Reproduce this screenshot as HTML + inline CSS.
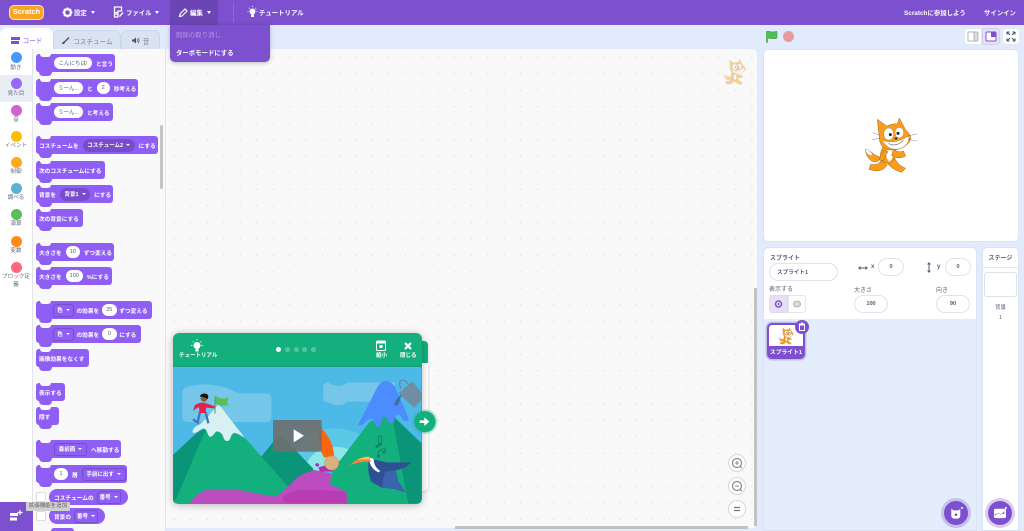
<!DOCTYPE html>
<html lang="ja"><head><meta charset="utf-8"><title>Scratch</title>
<style>
*{box-sizing:border-box}
html{margin:0;padding:0;background:#e1ebfb}
body{margin:0;padding:0;width:1024px;height:531px;overflow:hidden;position:relative;background:#e1ebfb;font-family:"Liberation Sans","Noto Sans CJK JP",sans-serif;font-size:6.4px;color:#575e75;filter:blur(.3px)}
.a{position:absolute;white-space:nowrap}
.hd{left:0;top:0;width:1024px;height:25px;background:#7c50ce}
.w{color:#fff;font-weight:700}
.caret{position:absolute;width:0;height:0;border-left:2.5px solid transparent;border-right:2.5px solid transparent;border-top:3px solid #fff}
.tab{position:absolute;top:30px;height:20px;background:#d9e3f2;border:1px solid #ccd8ea;border-bottom:0;border-radius:6px 6px 0 0;color:#7d8599;font-size:6.6px;display:flex;align-items:center;justify-content:center;gap:3px}
.cat{position:absolute;width:11px;height:11px;border-radius:50%;left:10.5px}
.cl{position:absolute;left:0;width:32px;text-align:center;font-size:5.6px;line-height:8px;color:#666c80}
.b{position:absolute;left:36px;height:18px;background:#8f5ff5;border-radius:3px;color:#fff;font-size:5.7px;font-weight:700;display:flex;align-items:center;gap:4px;padding-left:3px;white-space:nowrap}
.b:after{content:"";position:absolute;left:3px;bottom:-3.5px;width:13px;height:4px;background:#8f5ff5;border-radius:0 0 4px 4px}
.b:before{content:"";position:absolute;left:4px;top:0;width:11px;height:3px;background:#f9f9f9;border-radius:0 0 4px 4px}
.s{padding-left:18px}
.p{background:#fff;color:#575e75;border-radius:6px;height:12px;display:inline-flex;align-items:center;justify-content:center;font-weight:400;font-size:5.5px;flex:none}
.d{background:#774dcb;color:#fff;border-radius:7px;height:13px;display:inline-flex;align-items:center;justify-content:center;gap:3px;font-size:5.5px;flex:none}
.o{background:#8f5ff5;border:.5px solid #774dcb;border-radius:3px}
.d i{display:inline-block;width:0;height:0;border-left:2.2px solid transparent;border-right:2.2px solid transparent;border-top:2.6px solid #fff}
.r{position:absolute;height:16px;background:#8f5ff5;border-radius:8px;color:#fff;font-weight:700;font-size:5.7px;display:flex;align-items:center;gap:3px;padding-left:5px;white-space:nowrap}
.ck{position:absolute;left:36px;width:10px;height:10px;background:#fff;border:1px solid #ddd;border-radius:2px}
.in{position:absolute;background:#fff;border:1px solid #dfe3ea;border-radius:10px;height:18px;display:flex;align-items:center;justify-content:center;font-size:5.6px;color:#575e75;font-weight:700}
.z{position:absolute;left:728px;width:18px;height:18px;border-radius:50%;background:#fff;border:1px solid #d8d8d8;color:#777}
.sq{position:absolute;top:28px;width:18px;height:17px;background:#fff;border:1px solid #e3e9f2}
.fab{position:absolute;top:501px;width:24px;height:24px;border-radius:50%;background:#7c50ce;box-shadow:0 0 0 3px rgba(124,80,206,.28)}
</style></head><body>
<svg width="0" height="0" style="position:absolute"><defs>
<symbol id="cat" viewBox="0 0 270 270">
<path d="M115 183C95 192 78 172 76 148 88 148 98 162 112 168L122 172Z" fill="#fa9c1c" stroke="#9a6a20" stroke-width="1.500"/>
<path d="M76 148C86 148 94 156 98 166 88 168 78 160 76 148Z" fill="#fff" stroke="#999" stroke-width="1"/>
<path d="M125 180Q115 198 92 193L87 208Q125 222 142 194Z" fill="#fa9c1c" stroke="#9a6a20" stroke-width="1.500"/>
<path d="M135 180Q150 207 185 217L197 205Q170 195 162 168Z" fill="#fa9c1c" stroke="#9a6a20" stroke-width="1.500"/>
<path d="M128 142Q116 165 125 186L150 190Q168 178 166 146Z" fill="#fa9c1c" stroke="#9a6a20" stroke-width="1.500"/>
<path d="M140 150Q135 172 148 186 162 175 160 148Z" fill="#fff"/>
<path d="M160 148Q178 160 190 153L197 168Q175 180 155 166Z" fill="#fa9c1c" stroke="#9a6a20" stroke-width="1.500"/>
<path d="M132 150Q120 165 118 180L130 182Q136 165 144 155Z" fill="#fa9c1c" stroke="#9a6a20" stroke-width="1.500"/>
<path d="M112 58L140 78Q160 70 172 72L178 54 197 90Q222 110 205 130 185 152 150 150 118 145 118 112 115 90 112 58Z" fill="#fa9c1c" stroke="#9a6a20" stroke-width="1.500"/>
<path d="M126 120Q160 136 206 108 210 135 180 146 145 154 126 120Z" fill="#fff" stroke="#9a6a20" stroke-width="1"/>
<ellipse cx="146" cy="102" rx="15" ry="18" fill="#fff" stroke="#777" stroke-width="1.200"/><ellipse cx="178" cy="98" rx="13" ry="16" fill="#fff" stroke="#777" stroke-width="1.200"/>
<circle cx="151" cy="104" r="4.500" fill="#222"/><circle cx="174" cy="100" r="4.500" fill="#222"/><path d="M162 114l11-2-4 8z" fill="#222"/>
<path d="M146 130C158 140 180 134 190 120" fill="none" stroke="#333" stroke-width="1.600"/>
<path d="M98 98l22 8M96 118l24-2M204 108l26-6M204 118l26 4" stroke="#666" stroke-width="1.200" fill="none"/>
</symbol></defs></svg>

<div class="a hd"></div>
<div class="a" style="left:9px;top:5px;width:35px;height:15px;background:#f7a623;border:1.500px solid #fde3b5;border-radius:5px;color:#fff;font-size:7.500px;font-weight:700;text-align:center;line-height:12px;overflow:hidden">Scratch</div>
<svg class="a" style="left:62px;top:7px" width="11" height="11" viewBox="0 0 11 11"><circle cx="5.500" cy="5.500" r="3.400" fill="none" stroke="#fff" stroke-width="2.200"/><path d="M5.500 .5v2M5.500 8.500v2M.5 5.500h2M8.500 5.500h2M2 2l1.400 1.400M7.600 7.600L9 9M9 2L7.600 3.400M3.400 7.600L2 9" stroke="#fff" stroke-width="1.600"/></svg>
<div class="a w" style="left:74px;top:8px">設定</div><div class="caret" style="left:91px;top:11px"></div>
<svg class="a" style="left:113px;top:6px" width="11" height="12" viewBox="0 0 11 12"><path d="M1.500 1h7v4H5v1.500H1.500zM1.500 8h3.500v3H1.500z" fill="none" stroke="#fff" stroke-width="1.300"/><path d="M6 10l3.500-4 1 1-3.500 4z" fill="#fff"/></svg>
<div class="a w" style="left:126px;top:8px">ファイル</div><div class="caret" style="left:155px;top:11px"></div>
<div class="a" style="left:170px;top:0;width:48px;height:25px;background:#6b45b4"></div>
<svg class="a" style="left:178px;top:7px" width="10" height="11" viewBox="0 0 10 11"><path d="M1.500 9.500l.5-2.500 5-5 2 2-5 5z" fill="none" stroke="#fff" stroke-width="1.200"/></svg>
<div class="a w" style="left:190px;top:8px">編集</div><div class="caret" style="left:207px;top:11px"></div>
<div class="a" style="left:233px;top:3px;height:19px;border-left:1px dotted #9e7fdc"></div>
<svg class="a" style="left:247px;top:6px" width="11" height="13" viewBox="0 0 11 13"><circle cx="5.500" cy="5.500" r="3" fill="#fff"/><rect x="4" y="8.500" width="3" height="2.500" fill="#fff"/><path d="M5.500 0v1M.5 5.500h1M9.500 5.500h1M1.800 1.800l.8.8M9.200 1.800l-.8.8" stroke="#fff" stroke-width=".8"/></svg>
<div class="a w" style="left:259px;top:8px">チュートリアル</div>
<div class="a w" style="left:904px;top:8px">Scratchに参加しよう</div>
<div class="a w" style="left:984px;top:8px">サインイン</div>

<div class="a" style="left:170px;top:25px;width:100px;height:37px;background:#7c50ce;border-radius:0 0 5px 5px;box-shadow:0 1px 4px rgba(0,0,0,.25);z-index:5">
<div class="a" style="left:6px;top:5px;color:#b49ae3">削除の取り消し</div>
<div class="a w" style="left:6px;top:23px">ターボモードにする</div></div>

<div class="tab" style="left:53px;width:68px"><svg width="9" height="9" viewBox="0 0 9 9"><path d="M1 8q0-2 2-2.500L7.500 1 8.500 2 4 6.500Q3 8.500 1 8z" fill="#4a5568"/></svg>コスチューム</div>
<div class="tab" style="left:121px;width:39px"><svg width="8" height="7" viewBox="0 0 8 7"><path d="M0 2.500h1.500L4 .5v6L1.500 4.500H0z" fill="#4a5568"/><path d="M5 2q1 1.500 0 3M6.300 1q1.600 2.500 0 5" stroke="#4a5568" stroke-width=".7" fill="none"/></svg> 音</div>
<div class="a" style="left:0;top:28px;width:53px;height:22px;background:#fff;border-radius:7px 7px 0 0;color:#855cd6;font-size:6.600px;display:flex;align-items:center;justify-content:center;gap:3px;padding-top:2px"><svg width="9" height="7" viewBox="0 0 9 7"><path d="M0 0h9v3H0zM0 4h8v3H0z" fill="#7c50ce"/></svg>コード</div>

<div class="a" style="left:0;top:49px;width:33px;height:482px;background:#fff;border-right:1px solid #e1e4ea"></div>
<div class="a" style="left:0;top:75px;width:32px;height:27px;background:#e9eef5"></div>
<div class="cat" style="top:52px;background:#4c97ff"></div><div class="cl" style="top:64px">動き</div>
<div class="cat" style="top:78px;background:#9966ff"></div><div class="cl" style="top:90px">見た目</div>
<div class="cat" style="top:105px;background:#cf63cf"></div><div class="cl" style="top:116px">音</div>
<div class="cat" style="top:131px;background:#ffbf00"></div><div class="cl" style="top:142px">イベント</div>
<div class="cat" style="top:157px;background:#ffab19"></div><div class="cl" style="top:168px">制御</div>
<div class="cat" style="top:183px;background:#5cb1d6"></div><div class="cl" style="top:194px">調べる</div>
<div class="cat" style="top:209px;background:#59c059"></div><div class="cl" style="top:220px">演算</div>
<div class="cat" style="top:236px;background:#ff8c1a"></div><div class="cl" style="top:247px">変数</div>
<div class="cat" style="top:262px;background:#ff6680"></div><div class="cl" style="top:273px">ブロック定<br>義</div>

<div class="a" style="left:33px;top:49px;width:133px;height:482px;background:#f9f9f9;border-right:1px solid #dfe3ea;overflow:hidden"></div>
<div class="a" style="left:166px;top:49px;width:591px;height:479px;background-color:#f9f9f9;background-image:radial-gradient(circle,#e4e4e4 .6px,transparent .9px);background-size:16.500px 16.500px;border-radius:0 5px 5px 0"></div>
<div class="a" style="left:160px;top:125px;width:3px;height:64px;background:#c4c4c4;border-radius:2px"></div>
<div class="a" style="left:754px;top:288px;width:3px;height:238px;background:#c2c2c2"></div>
<div class="a" style="left:455px;top:526px;width:293px;height:3px;background:#c2c2c2"></div>

<div class="b s" style="top:54px;width:79px"><span class="p" style="width:38px">こんにちは!</span>と言う</div>
<div class="b s" style="top:79px;width:102px"><span class="p" style="width:29px">うーん...</span>と<span class="p" style="width:13px">2</span>秒考える</div>
<div class="b s" style="top:103px;width:77px"><span class="p" style="width:29px">うーん...</span>と考える</div>
<div class="b" style="top:136px;width:122px">コスチュームを<span class="d" style="width:52px">コスチューム2<i></i></span>にする</div>
<div class="b" style="top:161px;width:69px">次のコスチュームにする</div>
<div class="b" style="top:185px;width:77px">背景を<span class="d" style="width:30px">背景1<i></i></span>にする</div>
<div class="b" style="top:209px;width:47px">次の背景にする</div>
<div class="b" style="top:243px;width:78px">大きさを<span class="p" style="width:14px">10</span>ずつ変える</div>
<div class="b" style="top:267px;width:76px">大きさを<span class="p" style="width:17px">100</span>%にする</div>
<div class="b s" style="top:301px;width:116px;padding-left:17px;gap:2.500px"><span class="d o" style="width:21px">色<i></i></span>の効果を<span class="p" style="width:15px">25</span>ずつ変える</div>
<div class="b s" style="top:325px;width:105px;padding-left:17px;gap:2.500px"><span class="d o" style="width:21px">色<i></i></span>の効果を<span class="p" style="width:15px">0</span>にする</div>
<div class="b" style="top:349px;width:53px">画像効果をなくす</div>
<div class="b" style="top:383px;width:29px">表示する</div>
<div class="b" style="top:407px;width:23px">隠す</div>
<div class="b s" style="top:440px;width:85px"><span class="d o" style="width:33px">最前面<i></i></span>へ移動する</div>
<div class="b s" style="top:465px;width:91px"><span class="p" style="width:14px">1</span>層<span class="d o" style="width:44px">手前に出す<i></i></span></div>
<div class="ck" style="top:492px"></div>
<div class="r" style="left:49px;top:489px;width:79px">コスチュームの<span class="d o" style="width:24px">番号<i></i></span></div>
<div class="ck" style="top:511px"></div>
<div class="r" style="left:49px;top:508px;width:56px">背景の<span class="d o" style="width:24px">番号<i></i></span></div>
<div class="a" style="left:51px;top:528px;width:23px;height:3px;background:#8f5ff5;border-radius:5px 5px 0 0"></div>

<div class="a" style="left:0;top:502px;width:33px;height:29px;background:#7c50ce"></div>
<svg class="a" style="left:9px;top:509px" width="14" height="14" viewBox="0 0 14 14"><path d="M1 4h8v3H1zM1 8.500h7v3H1z" fill="#fff"/><path d="M11 1v5M8.500 3.500h5" stroke="#fff" stroke-width="1.200"/></svg>
<div class="a" style="left:26px;top:502px;width:44px;height:9px;background:#d0d0d0;color:#666;font-size:5.500px;line-height:9px;text-align:center;border-radius:1px">拡張機能を追加</div>

<svg class="a" style="left:712px;top:51px;opacity:.45" width="42" height="42"><use href="#cat"/></svg>
<div class="z" style="top:454px"><svg width="16" height="16" viewBox="0 0 16 16"><circle cx="8" cy="8" r="4.500" fill="none" stroke="#888" stroke-width="1.200"/><path d="M11 11l2 2M6 8h4M8 6v4" stroke="#888"/></svg></div>
<div class="z" style="top:477px"><svg width="16" height="16" viewBox="0 0 16 16"><circle cx="8" cy="8" r="4.500" fill="none" stroke="#888" stroke-width="1.200"/><path d="M11 11l2 2M6 8h4" stroke="#888"/></svg></div>
<div class="z" style="top:500px"><svg width="16" height="16" viewBox="0 0 16 16"><path d="M5 6.500h6M5 9.500h6" stroke="#777" stroke-width="1.200"/></svg></div>

<svg class="a" style="left:765px;top:30px" width="13" height="13" viewBox="0 0 13 13"><path d="M1.500 1.500C4 .5 6 3 10.500 1.500 11.500 1.200 12 1.500 12 2V8C8 10 5 7.500 2.500 8.500V12.500H1.500Z" fill="#4cbf56" stroke="#45993d" stroke-width=".6"/></svg>
<div class="a" style="left:783px;top:31px;width:11px;height:11px;border-radius:50%;background:#e79a9e"></div>
<div class="sq" style="left:964px;border-radius:4px 0 0 4px"><svg width="16" height="15" viewBox="0 0 16 15"><rect x="3" y="3" width="10" height="9" rx="1" fill="#ddd" stroke="#aaa" stroke-width=".8"/><rect x="3" y="3" width="6" height="9" fill="#fff" stroke="#aaa" stroke-width=".8"/></svg></div>
<div class="sq" style="left:982px;background:#e6dff5;border-radius:0 4px 4px 0;border-color:#d8cdf0"><svg width="16" height="15" viewBox="0 0 16 15"><rect x="3" y="3" width="10" height="9" rx="1" fill="#fff" stroke="#7c50ce" stroke-width="1"/><rect x="8" y="3" width="5" height="5" fill="#7c50ce"/></svg></div>
<div class="sq" style="left:1002px;border-radius:4px"><svg width="16" height="15" viewBox="0 0 16 15"><path d="M4 3l3 3M12 3L9 6M4 12l3-3M12 12L9 9M4 3h2.500M4 3v2.500M12 3H9.500M12 3v2.500M4 12h2.500M4 12V9.500M12 12H9.500M12 12V9.500" stroke="#4a5568" stroke-width="1.100" fill="none"/></svg></div>
<div class="a" style="left:763px;top:49px;width:256px;height:193px;background:#fff;border:1px solid #d9e3f2;border-radius:5px"></div>
<svg class="a" style="left:840px;top:100px" width="90" height="90"><use href="#cat"/></svg>

<div class="a" style="left:763px;top:247px;width:214px;height:284px;background:#e3edfb;border:1px solid #d9e3f2;border-radius:5px 5px 0 0"></div>
<div class="a" style="left:764px;top:248px;width:212px;height:71px;background:#fff;border-radius:5px 5px 0 0"></div>
<div class="a" style="left:770px;top:253px;font-weight:700;font-size:6px">スプライト</div>
<div class="in" style="left:769px;top:263px;width:69px;justify-content:flex-start;padding-left:7px">スプライト1</div>
<svg class="a" style="left:858px;top:264px" width="10" height="8" viewBox="0 0 10 8"><path d="M1 4h8" stroke="#575e75"/><path d="M0 4l2.500-2v4zM10 4l-2.500-2v4z" fill="#575e75"/></svg>
<div class="a" style="left:871px;top:264px;font-size:6px;font-weight:700">x</div>
<div class="in" style="left:878px;top:258px;width:26px">0</div>
<svg class="a" style="left:925px;top:262px" width="8" height="11" viewBox="0 0 8 11"><path d="M4 1v9" stroke="#575e75"/><path d="M4 0l2 2.500H2zM4 11l2-2.500H2z" fill="#575e75"/></svg>
<div class="a" style="left:937px;top:264px;font-size:6px;font-weight:700">y</div>
<div class="in" style="left:945px;top:258px;width:26px">0</div>
<div class="a" style="left:769px;top:284px;font-size:6px">表示する</div>
<div class="a" style="left:769px;top:295px;width:19px;height:18px;background:#e6dff5;border:1px solid #e0d8f2;border-radius:3px 0 0 3px"><svg width="17" height="16" viewBox="0 0 17 16"><circle cx="8.500" cy="8" r="3" fill="none" stroke="#7c50ce" stroke-width="1.500"/><circle cx="8.500" cy="8" r="1" fill="#7c50ce"/></svg></div>
<div class="a" style="left:788px;top:295px;width:18px;height:18px;background:#fff;border:1px solid #e3e6ec;border-radius:0 3px 3px 0"><svg width="16" height="16" viewBox="0 0 16 16"><ellipse cx="8" cy="8" rx="3.500" ry="2.800" fill="#ddd" stroke="#b8b8b8" stroke-width="1.200"/></svg></div>
<div class="a" style="left:854px;top:285px;font-size:6px">大きさ</div>
<div class="in" style="left:854px;top:295px;width:34px">100</div>
<div class="a" style="left:936px;top:285px;font-size:6px">向き</div>
<div class="in" style="left:936px;top:295px;width:34px">90</div>

<div class="a" style="left:767px;top:323px;width:38px;height:36px;background:#7c50ce;border-radius:5px;box-shadow:0 0 0 1.500px rgba(124,80,206,.3)"></div>
<div class="a" style="left:769px;top:325px;width:34px;height:21px;background:#fff;border-radius:3px 3px 0 0;overflow:hidden"><svg class="a" style="left:2px;top:-3px" width="28" height="28"><use href="#cat"/></svg></div>
<div class="a w" style="left:767px;top:347px;width:38px;text-align:center;font-size:5.800px">スプライト1</div>
<div class="a" style="left:795px;top:320px;width:14px;height:14px;border-radius:50%;background:#7c50ce"><svg width="14" height="14" viewBox="0 0 14 14"><path d="M4.500 5h5v5.500h-5zM4 4h6M6 3h2" stroke="#fff" fill="none" stroke-width="1"/></svg></div>

<div class="a" style="left:982px;top:247px;width:37px;height:284px;background:#fff;border:1px solid #d9e3f2;border-radius:5px 5px 0 0"></div>
<div class="a" style="left:982px;top:267px;width:37px;border-top:1px solid #e3e6ec"></div>
<div class="a" style="left:982px;top:253px;width:37px;text-align:center;font-weight:700;font-size:6px">ステージ</div>
<div class="a" style="left:984px;top:272px;width:33px;height:25px;background:#fff;border:1.500px solid #dde2ea;border-radius:3px"></div>
<div class="a" style="left:982px;top:303px;width:37px;text-align:center;font-size:5.500px">背景</div>
<div class="a" style="left:982px;top:315px;width:37px;text-align:center;font-size:5.500px">1</div>

<div class="fab" style="left:944px"><svg width="24" height="24" viewBox="0 0 28 28"><path d="M8.500 9l2.500 2h6l2-2v8c0 2-1.500 3.500-3.500 3.500h-3.500c-2 0-3.500-1.500-3.500-3.500z" fill="#fff"/><circle cx="14" cy="16" r="1.500" fill="#7c50ce"/><circle cx="21" cy="8" r="1.200" fill="#fff"/></svg></div>
<div class="fab" style="left:988px"><svg width="24" height="24" viewBox="0 0 28 28"><rect x="7" y="9" width="14" height="11" rx="2" fill="#fff"/><path d="M8 17l4-3 3 2 4-4v3H8z" fill="#7c50ce"/><circle cx="21" cy="8" r="1.200" fill="#fff"/></svg></div>

<div class="a" style="left:420px;top:341px;width:8px;height:150px;background:#fff;border-radius:0 4px 4px 0;box-shadow:0 1px 3px rgba(0,0,0,.15)"></div>
<div class="a" style="left:420px;top:341px;width:8px;height:22px;background:#13b07d;border-radius:0 4px 0 0"></div>
<div class="a" style="left:173px;top:333px;width:249px;height:171px;background:#13b07d;border-radius:6px;box-shadow:0 1px 8px rgba(0,0,0,.28)"></div>
<svg class="a" style="left:165px;top:325px" width="280" height="190" viewBox="0 0 840 570">
<defs><clipPath id="ill"><path d="M24 125H770V520Q770 536 754 536H40Q24 536 24 520Z"/></clipPath></defs>
<rect x="24" y="122" width="746" height="4" fill="#0f9a6c"/>
<g clip-path="url(#ill)">
<rect x="24" y="125" width="746" height="411" fill="#4cb9e6"/>
<path d="M52 200Q52 180 120 178Q180 180 220 205H305Q319 205 319 220V278Q319 291 305 291H70Q52 291 52 275Z" fill="#75c6e8"/>
<path d="M475 185Q475 172 490 172Q505 185 530 182L550 172H690V230H545Q535 245 510 240L490 232Q475 232 475 220Z" fill="#75c6e8"/>
<path d="M380 420A130 110 0 0 1 640 420Z" fill="#5ac8e6"/>
<path d="M420 440A90 75 0 0 1 600 440Z" fill="#8fe6ea"/>
<path d="M24 390L99 320 135 305 60 536H24Z" fill="#0b9578"/>
<path d="M289 395L329 345Q345 330 362 345L444 430 470 536H289Z" fill="#0b9578"/>
<path d="M34 520L124 310Q150 285 175 310L239 338 374 490 380 536H24Z" fill="#13b07d"/>
<path d="M82 322Q84 305 105 298L124 280 159 240Q170 246 180 262L239 338C225 330 215 320 205 325 195 330 198 350 185 348 172 346 178 325 160 320 148 317 150 330 138 335 128 340 128 310 115 310 102 312 100 328 82 322Z" fill="#d8f0f4"/>
<path d="M679 268L770 355V536H729Z" fill="#0b9578"/>
<path d="M494 480Q495 440 530 400L614 290 680 265 729 536H544Q500 500 494 480Z" fill="#13b07d"/>
<path d="M579 300L638 185Q660 150 690 185L731 280C730 295 715 290 708 275 700 262 690 270 688 285 686 300 672 300 668 285 664 272 652 272 650 285 648 315 630 310 628 290 626 278 612 280 605 288 595 300 585 305 579 300Z" fill="#4c8cff"/>
<path d="M72 536Q100 495 144 492L224 495 324 515Q345 510 364 490L399 455Q430 440 449 435L499 445 495 478 544 500 546 540H72Z" fill="#bb4dc0"/>
<path d="M354 516Q370 500 399 495L470 495 544 500 546 536H370Q350 530 354 516Z" fill="#b83db5"/>
<path d="M460 428Q475 420 505 422V440H465Z" fill="#a832ad"/>
<path d="M450 418q8-8 12 0q4 6-8 7z" fill="#a832ad"/>
<path d="M458 300Q505 340 507 392L478 398Q458 370 458 300Z" fill="#fb6410"/>
<circle cx="500" cy="414" r="21" fill="#d9b17e" stroke="#c39a62" stroke-width="2"/>
<rect x="324" y="285" width="146" height="95" fill="#6f6f6f" fill-opacity=".9"/>
<path d="M386 313L417 332 386 352Z" fill="#fff"/>
<path d="M708 192Q700 175 708 166 720 162 732 180" fill="none" stroke="#627f96" stroke-width="3"/>
<path d="M700 205L742 170 772 205V222L748 248Z" fill="#6f8da5"/>
<path d="M688 240Q692 220 710 208L700 238Q694 244 688 240Z" fill="#3c6da4"/>
<path d="M640 335v28M650 332v24M640 335l10-3M640 380v14M660 368v14M640 380l20-12" stroke="#0b7f66" stroke-width="2.500" fill="none"/>
<circle cx="636" cy="364" r="4.500" fill="#0b7f66"/><circle cx="646" cy="358" r="4.500" fill="#0b7f66"/><circle cx="640" cy="393" r="4.500" fill="#0b7f66"/><circle cx="656" cy="382" r="4.500" fill="#0b7f66"/>
<path d="M610 400L665 412 740 412 720 428 692 436 700 470 722 502 690 492 650 488 618 470 610 440Z" fill="#2e5195"/>
<path d="M650 488L660 440 692 436 700 470 722 502 690 492Z" fill="#3c63ad"/>
<path d="M612 397L626 402Q626 425 646 438L640 442Q612 428 612 397Z" fill="#fff"/>
<path d="M555 420Q575 398 612 395L618 410Q590 408 555 420Z" fill="#f4863c"/>
<path d="M575 405Q595 395 612 395V403Q590 402 575 405Z" fill="#ffc34d"/>
<path d="M150 214V266" stroke="#3ea055" stroke-width="3"/><path d="M152 213Q170 225 192 218L186 232 192 240Q170 246 152 236Z" fill="#59c059"/>
<path d="M105 260L98 292 84 283M122 262L130 295" stroke="#3a78b8" stroke-width="7" fill="none"/>
<path d="M90 240Q110 228 126 236L150 244 148 250 124 248 122 264H104L102 246 92 252 84 258Z" fill="#e5204f"/>
<circle cx="117" cy="220" r="10" fill="#8c5a2e"/><path d="M104 215Q110 202 125 207 133 212 128 222 115 214 104 215Z" fill="#111"/>
</g>
<circle cx="780" cy="290" r="38" fill="#13b07d" fill-opacity=".25"/><circle cx="780" cy="290" r="32" fill="#13b07d"/>
<path d="M764 286h14v-9l15 13-15 13v-9h-14z" fill="#fff"/>
</svg>
<svg class="a" style="left:190px;top:339px" width="14" height="14" viewBox="0 0 14 14"><circle cx="7" cy="6.500" r="3.500" fill="#fff"/><rect x="5.500" y="10" width="3" height="2.500" fill="#fff"/><path d="M7 0v1.500M1 6.500h1.500M11.500 6.500H13M2.800 2.300l1 1M11.200 2.300l-1 1" stroke="#cfeee3" stroke-width=".9"/></svg>
<div class="a w" style="left:179px;top:351px;font-size:5.500px">チュートリアル</div>
<div class="a" style="left:276px;top:347px;width:5px;height:5px;border-radius:50%;background:#fff"></div>
<div class="a" style="left:285px;top:347px;width:4.500px;height:4.500px;border-radius:50%;background:#4fc49d"></div>
<div class="a" style="left:294px;top:347px;width:4.500px;height:4.500px;border-radius:50%;background:#4fc49d"></div>
<div class="a" style="left:302px;top:347px;width:4.500px;height:4.500px;border-radius:50%;background:#4fc49d"></div>
<div class="a" style="left:311px;top:347px;width:4.500px;height:4.500px;border-radius:50%;background:#4fc49d"></div>
<svg class="a" style="left:375px;top:340px" width="12" height="12" viewBox="0 0 12 12"><rect x="1.500" y="1" width="9" height="9.500" rx="1" fill="none" stroke="#fff"/><rect x="1.500" y="1" width="9" height="2.500" fill="#fff"/><rect x="4.500" y="5" width="3" height="3" fill="#fff"/></svg>
<div class="a w" style="left:376px;top:351px;font-size:5.500px">縮小</div>
<svg class="a" style="left:403px;top:341px" width="10" height="10" viewBox="0 0 10 10"><path d="M2 2l6 6M8 2l-6 6" stroke="#fff" stroke-width="2.200"/></svg>
<div class="a w" style="left:400px;top:351px;font-size:5.500px">閉じる</div>
</body></html>
